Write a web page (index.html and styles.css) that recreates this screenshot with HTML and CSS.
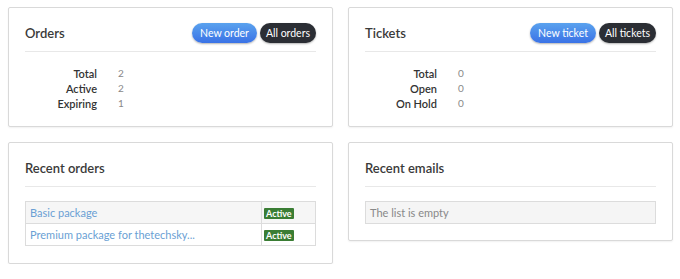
FILE: index.html
```html
<!DOCTYPE html>
<html>
<head>
<meta charset="utf-8">
<link rel="stylesheet" href="styles.css">
</head>
<body>
<div class="grid">
  <section class="card">
    <div class="card-head">
      <h2 class="title">Orders</h2>
      <div class="actions">
        <a class="btn btn-blue">New order</a>
        <a class="btn btn-dark">All orders</a>
      </div>
    </div>
    <div class="stats">
      <div class="label">Total</div><div class="val">2</div>
      <div class="label">Active</div><div class="val">2</div>
      <div class="label">Expiring</div><div class="val">1</div>
    </div>
  </section>
  <section class="card">
    <div class="card-head">
      <h2 class="title">Tickets</h2>
      <div class="actions">
        <a class="btn btn-blue">New ticket</a>
        <a class="btn btn-dark">All tickets</a>
      </div>
    </div>
    <div class="stats">
      <div class="label">Total</div><div class="val">0</div>
      <div class="label">Open</div><div class="val">0</div>
      <div class="label">On Hold</div><div class="val">0</div>
    </div>
  </section>
  <section class="card">
    <div class="card-head">
      <h2 class="title">Recent orders</h2>
    </div>
    <table class="list">
      <tr class="odd"><td class="name"><a>Basic package</a></td><td class="st"><span class="badge">Active</span></td></tr>
      <tr><td class="name"><a>Premium package for thetechsky...</a></td><td class="st"><span class="badge">Active</span></td></tr>
    </table>
  </section>
  <section class="card">
    <div class="card-head">
      <h2 class="title">Recent emails</h2>
    </div>
    <div class="empty">The list is empty</div>
  </section>
</div>
</body>
</html>
```
FILE: styles.css
```css
* { box-sizing: border-box; }
html, body { margin: 0; background: #fff; }
body {
  padding: 7px 7px 0 8px;
  font-family: Lato, "Open Sans", sans-serif;
  color: #333;
}
.grid {
  display: grid;
  grid-template-columns: 325px 325px;
  column-gap: 15px;
  row-gap: 15px;
  align-items: start;
}
.card {
  border: 1px solid #d9d9d9;
  border-radius: 2px;
  box-shadow: 0 1px 2px rgba(0,0,0,0.06);
  padding: 0 16px 15px;
  background: #fff;
}
.card-head {
  display: flex;
  align-items: center;
  justify-content: space-between;
  height: 44px;
  padding-top: 6px;
  border-bottom: 1px solid #e8e8e8;
}
.title {
  margin: 0;
  font-size: 13px;
  font-weight: 600;
  color: #3a3a3a;
}
.actions { display: flex; gap: 3px; }
.btn {
  display: inline-block;
  height: 20px;
  line-height: 20px;
  border-radius: 10px;
  font-size: 10.5px;
  color: #fff;
  box-shadow: 0 1px 2px rgba(0,0,0,0.3);
}
.btn-blue { background: linear-gradient(#5aa2ee, #3a72e6); padding: 0 8px; }
.btn-dark { background: #2b2e34; padding: 0 6px; }
.stats {
  display: grid;
  grid-template-columns: 72px auto;
  column-gap: 21px;
  margin-top: 14px;
  line-height: 15px;
  font-size: 11px;
}
.label { text-align: right; font-weight: 600; color: #333; }
.val { color: #888; font-size: 10px; }
.list {
  margin-top: 14px;
  margin-bottom: 2px;
  width: 100%;
  border-collapse: collapse;
  border: 1px solid #dcdcdc;
  font-size: 11px;
}
.list td {
  border: 1px solid #dcdcdc;
  height: 22px;
  padding: 0 4px;
}
.list tr.odd { background: #f6f6f6; }
.list .name a { color: #6a9fd4; }
.list .st { width: 54px; padding: 0 2px; }
.badge {
  display: inline-block;
  background: #3a7d34;
  color: #fff;
  font-size: 9px;
  font-weight: 700;
  line-height: 11px;
  padding: 0 2px;
  border-radius: 1px;
}
.empty {
  margin-top: 14px;
  margin-bottom: 1px;
  height: 23px;
  line-height: 21px;
  border: 1px solid #dcdcdc;
  background: #f5f5f5;
  padding: 0 4px;
  font-size: 11px;
  color: #888;
}
```
